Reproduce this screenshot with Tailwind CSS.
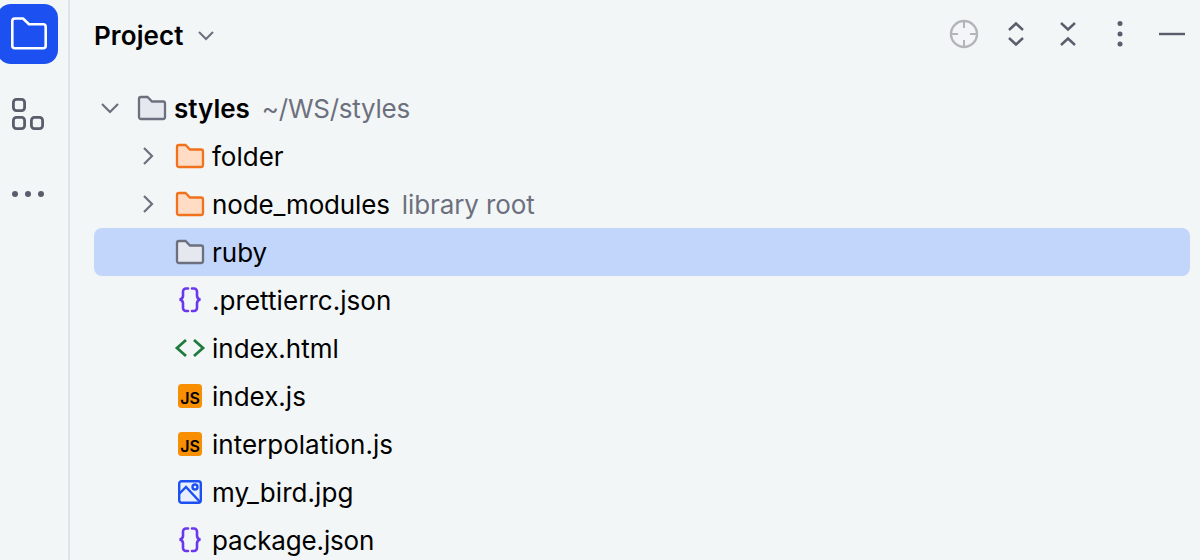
<!DOCTYPE html>
<html lang="en">
<head>
  <meta charset="UTF-8" />
  <title>Project</title>
  <script src="https://cdn.jsdelivr.net/npm/@tailwindcss/browser@4"></script>
</head>
<body class="bg-[#f3f6f6] font-['Inter',sans-serif] text-[26px] text-black overflow-hidden">
  <div class="flex h-[560px] w-[1200px] overflow-hidden">

    <!-- Tool window bar -->
    <div class="w-[70px] shrink-0 border-r-2 border-[#dfe3ea] flex flex-col pt-1">
      <div class="w-[61px] h-[60px] -ml-[3px] rounded-[14px] bg-[#1d50f0] flex items-center justify-center">
        <svg class="ml-[3px]" width="40" height="36" viewBox="0 0 40 36" fill="none" stroke="#fff" stroke-width="2.6" stroke-linejoin="round"><path d="M3.3 5a2.5 2.5 0 0 1 2.5-2.5h8.2l6 5.7h14.2a2.5 2.5 0 0 1 2.5 2.5v19a2.5 2.5 0 0 1-2.5 2.5H5.8a2.5 2.5 0 0 1-2.5-2.5z"/></svg>
      </div>
      <div class="mt-[32px] ml-[8px] w-[40px] h-[40px]">
        <svg width="40" height="40" viewBox="0 0 40 40" fill="none" stroke="#5a5d6b" stroke-width="2.8"><rect x="5.4" y="3.4" width="11.2" height="11.200" rx="3"/><rect x="5.4" y="21.4" width="11.2" height="11.200" rx="3"/><rect x="23.4" y="21.4" width="11.2" height="11.200" rx="3"/></svg>
      </div>
      <div class="mt-[55px] ml-[12px] flex gap-[7px]">
        <span class="w-[6px] h-[6px] rounded-full bg-[#5a5d6b]"></span>
        <span class="w-[6px] h-[6px] rounded-full bg-[#5a5d6b]"></span>
        <span class="w-[6px] h-[6px] rounded-full bg-[#5a5d6b]"></span>
      </div>
    </div>

    <div class="flex-1 pl-6 pr-[10px]">
      <!-- Header -->
      <div class="h-[84px] pb-[14px] flex items-center justify-between pr-[2px]">
        <div class="flex items-center gap-[6px]">
          <span class="font-semibold tracking-[0.1px]">Project</span>
          <svg width="32" height="32" viewBox="0 0 32 32" fill="none" stroke="#6c707e" stroke-width="2"><path d="M9 13l7 7 7-7"/></svg>
        </div>
        <div class="flex items-center gap-5 mb-[2px]">
          <svg width="32" height="32" viewBox="0 0 32 32" fill="none" stroke="#b4b5ba" stroke-width="2.4"><circle cx="16" cy="16" r="13"/><path d="M16 3v7M16 22v7M3 16h7M22 16h7" stroke-width="2"/></svg>
          <svg width="32" height="32" viewBox="0 0 32 32" fill="none" stroke="#5a5d6b" stroke-width="2.4"><path d="M9 12l7-6.500 7 6.500M9 20l7 6.500 7-6.500"/></svg>
          <svg width="32" height="32" viewBox="0 0 32 32" fill="none" stroke="#5a5d6b" stroke-width="2.4"><path d="M9 5l7 6.500 7-6.500M9 27l7-6.500 7 6.500"/></svg>
          <svg width="32" height="32" viewBox="0 0 32 32" fill="#5a5d6b"><circle cx="16" cy="5.500" r="2.500"/><circle cx="16" cy="16" r="2.500"/><circle cx="16" cy="26" r="2.500"/></svg>
          <svg width="32" height="32" viewBox="0 0 32 32" fill="none" stroke="#5a5d6b" stroke-width="2.400"><path d="M3 16h26"/></svg>
        </div>
      </div>

      <!-- Tree -->
      <div class="flex flex-col">
        <div class="h-12 flex items-center">
          <div class="w-[42px] shrink-0"><svg width="32" height="32" viewBox="0 0 32 32" fill="none" stroke="#6c707e" stroke-width="2.200"><path d="M8 12l8 8 8-8"/></svg></div>
          <svg class="shrink-0" width="32" height="32" viewBox="0 0 32 32" fill="#e6e8f0" stroke="#6c707e" stroke-width="2.300"><path d="M3 7a2 2 0 0 1 2-2h6.500l4.500 4.500h11a2 2 0 0 1 2 2V25a2 2 0 0 1-2 2H5a2 2 0 0 1-2-2z"/></svg>
          <span class="ml-[6px] font-semibold">styles</span>
          <span class="ml-[12px] text-[#6c707e] tracking-[-0.25px]">~/WS/styles</span>
        </div>

        <div class="h-12 flex items-center pl-[38px]">
          <div class="w-[42px] shrink-0"><svg width="32" height="32" viewBox="0 0 32 32" fill="none" stroke="#6c707e" stroke-width="2.200"><path d="M12 8l8 8-8 8"/></svg></div>
          <svg class="shrink-0" width="32" height="32" viewBox="0 0 32 32" fill="#ffdcc3" stroke="#f2711c" stroke-width="2.300"><path d="M3 7a2 2 0 0 1 2-2h6.500l4.500 4.500h11a2 2 0 0 1 2 2V25a2 2 0 0 1-2 2H5a2 2 0 0 1-2-2z"/></svg>
          <span class="ml-[6px]">folder</span>
        </div>

        <div class="h-12 flex items-center pl-[38px]">
          <div class="w-[42px] shrink-0"><svg width="32" height="32" viewBox="0 0 32 32" fill="none" stroke="#6c707e" stroke-width="2.200"><path d="M12 8l8 8-8 8"/></svg></div>
          <svg class="shrink-0" width="32" height="32" viewBox="0 0 32 32" fill="#ffdcc3" stroke="#f2711c" stroke-width="2.300"><path d="M3 7a2 2 0 0 1 2-2h6.500l4.500 4.500h11a2 2 0 0 1 2 2V25a2 2 0 0 1-2 2H5a2 2 0 0 1-2-2z"/></svg>
          <span class="ml-[6px] tracking-[-0.15px]">node_modules</span>
          <span class="ml-[12px] text-[#6c707e] tracking-[-0.1px]">library root</span>
        </div>

        <div class="h-12 flex items-center pl-[80px] bg-[#c2d6fc] rounded-lg">
          <svg class="shrink-0" width="32" height="32" viewBox="0 0 32 32" fill="#e6e8f0" stroke="#6c707e" stroke-width="2.300"><path d="M3 7a2 2 0 0 1 2-2h6.500l4.500 4.500h11a2 2 0 0 1 2 2V25a2 2 0 0 1-2 2H5a2 2 0 0 1-2-2z"/></svg>
          <span class="ml-[6px]">ruby</span>
        </div>

        <div class="h-12 flex items-center pl-[80px]">
          <svg class="shrink-0" width="32" height="32" viewBox="0 0 32 32" fill="none" stroke="#6b38f0" stroke-width="2.600" stroke-linecap="round"><path d="M14 4.500h-2a3 3 0 0 0-3 3V12a4 4 0 0 1-3.500 3.500A4 4 0 0 1 9 19v5a3 3 0 0 0 3 3h2M18 4.500h2a3 3 0 0 1 3 3V12a4 4 0 0 0 3.500 3.500A4 4 0 0 0 23 19v5a3 3 0 0 1-3 3h-2"/></svg>
          <span class="ml-[6px] tracking-[0.05px]">.prettierrc.json</span>
        </div>

        <div class="h-12 flex items-center pl-[80px]">
          <svg class="shrink-0" width="32" height="32" viewBox="0 0 32 32" fill="none" stroke="#1f7a3d" stroke-width="2.800"><path d="M12 8l-9 8 9 8M20 8l9 8-9 8"/></svg>
          <span class="ml-[6px]">index.html</span>
        </div>

        <div class="h-12 flex items-center pl-[80px]">
          <svg class="shrink-0" width="32" height="32" viewBox="0 0 32 32"><rect x="4" y="4" width="24" height="24" rx="3.500" fill="#f88f00"/><text x="16" y="23.500" text-anchor="middle" font-family="Inter, sans-serif" font-size="16" font-weight="600" fill="#000">JS</text></svg>
          <span class="ml-[6px]">index.js</span>
        </div>

        <div class="h-12 flex items-center pl-[80px]">
          <svg class="shrink-0" width="32" height="32" viewBox="0 0 32 32"><rect x="4" y="4" width="24" height="24" rx="3.500" fill="#f88f00"/><text x="16" y="23.500" text-anchor="middle" font-family="Inter, sans-serif" font-size="16" font-weight="600" fill="#000">JS</text></svg>
          <span class="ml-[6px]">interpolation.js</span>
        </div>

        <div class="h-12 flex items-center pl-[80px]">
          <svg class="shrink-0" width="32" height="32" viewBox="0 0 32 32" fill="none" stroke="#1d50f0" stroke-width="2.400"><rect x="5.200" y="5.200" width="21.600" height="21.600" rx="2.500" fill="#e8effe"/><circle cx="21" cy="11" r="2.500"/><path d="M5 18l7-7 14.500 15.500"/></svg>
          <span class="ml-[6px] tracking-[0.05px]">my_bird.jpg</span>
        </div>

        <div class="h-12 flex items-center pl-[80px]">
          <svg class="shrink-0" width="32" height="32" viewBox="0 0 32 32" fill="none" stroke="#6b38f0" stroke-width="2.600" stroke-linecap="round"><path d="M14 4.500h-2a3 3 0 0 0-3 3V12a4 4 0 0 1-3.500 3.500A4 4 0 0 1 9 19v5a3 3 0 0 0 3 3h2M18 4.500h2a3 3 0 0 1 3 3V12a4 4 0 0 0 3.500 3.500A4 4 0 0 0 23 19v5a3 3 0 0 1-3 3h-2"/></svg>
          <span class="ml-[6px] tracking-[-0.15px]">package.json</span>
        </div>
      </div>
    </div>
  </div>
</body>
</html>
